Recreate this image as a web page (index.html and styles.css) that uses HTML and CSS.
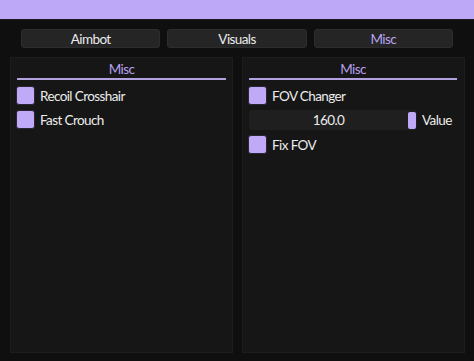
FILE: index.html
```html
<!DOCTYPE html>
<html>
<head>
<meta charset="utf-8">
<link rel="stylesheet" href="styles.css">
</head>
<body>
<div class="window">
  <div class="titlebar"></div>
  <div class="tabs">
    <div class="tab">Aimbot</div>
    <div class="tab">Visuals</div>
    <div class="tab active">Misc</div>
  </div>
  <div class="panels">
    <div class="panel">
      <div class="heading">Misc</div>
      <div class="rows">
        <div class="row"><span class="check"></span><span>Recoil Crosshair</span></div>
        <div class="row"><span class="check"></span><span>Fast Crouch</span></div>
      </div>
    </div>
    <div class="panel right">
      <div class="heading">Misc</div>
      <div class="rows">
        <div class="row"><span class="check"></span><span>FOV Changer</span></div>
        <div class="row slider-row">
          <div class="slider"><span class="val">160.0</span><span class="grab"></span></div>
          <span>Value</span>
        </div>
        <div class="row"><span class="check"></span><span>Fix FOV</span></div>
      </div>
    </div>
  </div>
</div>
</body>
</html>
```
FILE: styles.css
```css
html, body {
  margin: 0;
  padding: 0;
  background: #0f0f0f;
}
.window {
  width: 474px;
  height: 361px;
  background: #0f0f0f;
  font-family: "Lato", "Open Sans", sans-serif;
  font-size: 13.5px;
  letter-spacing: -0.6px;
  color: #ececec;
  overflow: hidden;
}
.titlebar {
  height: 19px;
  background: #bca8f6;
  border-bottom: 1px solid #1c1a22;
}
.tabs {
  display: grid;
  grid-template-columns: 1fr 1fr 1fr;
  gap: 7px;
  padding: 9px 21px 0 21px;
}
.tab {
  height: 17px;
  line-height: 18px;
  text-align: center;
  background: #252525;
  border: 1px solid #2d2d2d;
  border-radius: 3px;
}
.tab.active {
  color: #b9a4f0;
}
.panels {
  display: grid;
  grid-template-columns: 1fr 1fr;
  gap: 9px;
  padding: 9px 9px 0 10px;
}
.panel {
  height: 294px;
  background: #161616;
  border: 1px solid #1d1d1d;
  padding: 0 6px;
}
.panel.right {
  padding: 0 7px 0 6px;
}
.heading {
  color: #b6a0ee;
  text-align: center;
  height: 20px;
  line-height: 23px;
  border-bottom: 2px solid #b3a2e0;
}
.rows {
  display: flex;
  flex-direction: column;
  gap: 5px;
  padding-top: 6px;
}
.row {
  display: flex;
  align-items: center;
  gap: 5px;
  height: 19px;
}
.check {
  box-sizing: border-box;
  width: 19px;
  height: 19px;
  margin-left: -1px;
  background: #c0aaf8;
  border: 1px solid #2a2535;
  border-radius: 3px;
}
.slider-row {
  height: 20px;
  gap: 5px;
}
.slider {
  box-sizing: border-box;
  width: 168px;
  height: 20px;
  background: #1f1f1f;
  border-radius: 3px;
  display: flex;
  align-items: center;
  padding: 0 1px 0 0;
}
.val {
  flex: 1;
  text-align: center;
}
.grab {
  width: 8px;
  height: 17px;
  background: #c0aaf8;
  border-radius: 2px;
}
```
